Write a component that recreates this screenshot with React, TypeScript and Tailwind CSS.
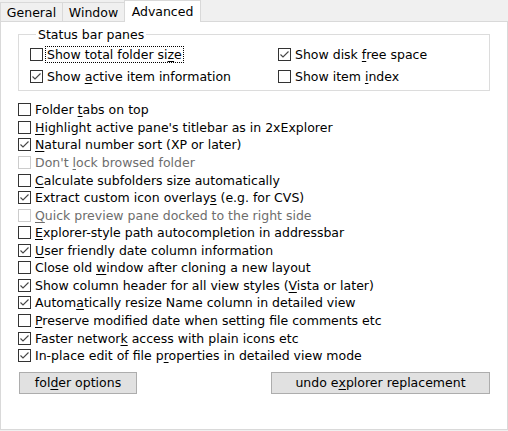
import React from 'react'

type Opt = {
  label: string
  key?: number // index of the access-key letter
  checked?: boolean
  disabled?: boolean
  focus?: boolean
}

const statusPanes: Opt[][] = [
  [
    { label: 'Show total folder size', key: 20, focus: true },
    { label: 'Show active item information', key: 5, checked: true },
  ],
  [
    { label: 'Show disk free space', key: 10, checked: true },
    { label: 'Show item index', key: 10 },
  ],
]

const options: Opt[] = [
  { label: 'Folder tabs on top', key: 7 },
  { label: "Highlight active pane's titlebar as in 2xExplorer", key: 0 },
  { label: 'Natural number sort (XP or later)', key: 0, checked: true },
  { label: "Don't lock browsed folder", key: 6, disabled: true },
  { label: 'Calculate subfolders size automatically', key: 0 },
  { label: 'Extract custom icon overlays (e.g. for CVS)', key: 27, checked: true },
  { label: 'Quick preview pane docked to the right side', key: 0, disabled: true },
  { label: 'Explorer-style path autocompletion in addressbar', key: 0 },
  { label: 'User friendly date column information', key: 0, checked: true },
  { label: 'Close old window after cloning a new layout', key: 10 },
  { label: 'Show column header for all view styles (Vista or later)', key: 40, checked: true },
  { label: 'Automatically resize Name column in detailed view', key: 5, checked: true },
  { label: 'Preserve modified date when setting file comments etc', key: 0 },
  { label: 'Faster network access with plain icons etc', key: 13, checked: true },
  { label: 'In-place edit of file properties in detailed view mode', key: 23, checked: true },
]

function Mnemonic({ text, at }: { text: string; at?: number }) {
  if (at === undefined) return <>{text}</>
  return (
    <>
      {text.slice(0, at)}
      <span className="underline underline-offset-[2px]">{text[at]}</span>
      {text.slice(at + 1)}
    </>
  )
}

function Box({ checked, disabled }: { checked?: boolean; disabled?: boolean }) {
  return (
    <span
      className={`flex size-[13px] shrink-0 items-center justify-center border bg-white ${
        disabled ? 'border-[#cccccc]' : 'border-[#333333]'
      }`}
    >
      {checked && (
        <svg width="11" height="11" viewBox="0 0 11 11">
          <path d="M1.5 5.5 L4 8 L9.5 2.5" fill="none" stroke="#454545" strokeWidth="1.1" />
        </svg>
      )}
    </span>
  )
}

function Check({ opt }: { opt: Opt }) {
  return (
    <div className="flex h-[17.57px] items-center gap-[3px]">
      <Box checked={opt.checked} disabled={opt.disabled} />
      <span
        className={`whitespace-nowrap px-px leading-[15px] ${opt.disabled ? 'text-[#6d6d6d]' : 'text-black'} ${
          opt.focus ? 'outline outline-1 outline-dotted outline-black' : ''
        }`}
      >
        <Mnemonic text={opt.label} at={opt.key} />
      </span>
    </div>
  )
}

function Tab({ label, active, className }: { label: string; active?: boolean; className: string }) {
  return (
    <div
      className={`flex items-start justify-center border-t border-l border-[#d9d9d9] ${
        active ? 'relative z-10 -mb-px h-[22px] border-r bg-white pt-[2px]' : 'h-[19px] bg-[#f0f0f0] pt-[1px]'
      } ${className}`}
    >
      {label}
    </div>
  )
}

function Button({ children, className }: { children: React.ReactNode; className: string }) {
  return (
    <button className={`flex h-[22px] items-center justify-center border border-[#adadad] bg-[#e1e1e1] text-black ${className}`}>
      {children}
    </button>
  )
}

export default function App() {
  return (
    <div
      className="flex h-[431px] w-[508px] flex-col bg-[#f0f0f0] text-[12.5px] text-black"
      style={{ fontFamily: '"DejaVu Sans", sans-serif' }}
    >
      <div className="flex h-[21px] items-end">
        <Tab label="General" className="w-[62px]" />
        <Tab label="Window" className="w-[62px]" />
        <Tab label="Advanced" active className="w-[77px]" />
      </div>

      <div className="flex h-[409px] flex-col border border-[#d9d9d9] bg-white">
        <fieldset className="ml-[17px] mr-[17px] mt-[4px] h-[65px] border border-[#dcdcdc] pl-[11px]">
          <legend className="ml-[6px] px-[2px] leading-[17px]">Status bar panes</legend>
          <div className="mt-[3px] grid grid-cols-[248px_1fr]">
            {statusPanes.map((col, i) => (
              <div key={i} className="flex flex-col gap-[4.5px]">
                {col.map((o) => (
                  <Check key={o.label} opt={o} />
                ))}
              </div>
            ))}
          </div>
        </fieldset>

        <div className="ml-[17px] mt-[10px] flex flex-col">
          {options.map((o) => (
            <Check key={o.label} opt={o} />
          ))}
        </div>

        <div className="mt-[8px] flex items-center pl-[18px]">
          <Button className="w-[118px]">
            <Mnemonic text="folder options" at={3} />
          </Button>
          <Button className="ml-auto mr-[17px] w-[219px]">
            <Mnemonic text="undo explorer replacement" at={6} />
          </Button>
        </div>
      </div>
    </div>
  )
}
